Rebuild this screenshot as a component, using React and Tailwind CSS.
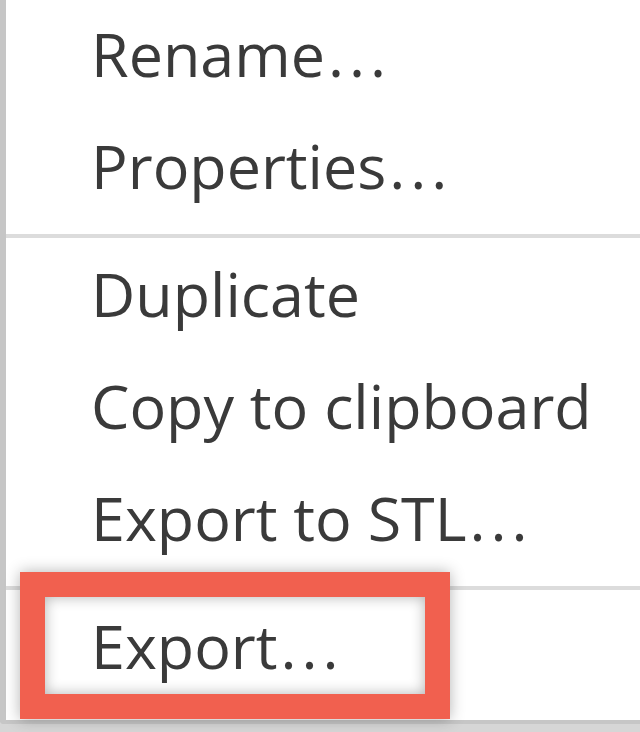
import React from 'react';

const font = { fontFamily: '"Open Sans", "Noto Sans", sans-serif' };

function Item({ label, dots, children }) {
  return (
    <div className="relative h-[112px] pl-[85px] text-[61px] leading-[112px] text-[#3a3a3a] whitespace-nowrap">
      {label}
      {dots && <span className="pl-[3px] tracking-[5px]">...</span>}
      {children}
    </div>
  );
}

function Separator() {
  return (
    <div className="h-[16px] flex flex-col justify-end">
      <div className="h-[4px] bg-[#dcdcdc]" />
    </div>
  );
}

export default function App() {
  return (
    <div className="w-[640px] h-[732px] overflow-hidden bg-[#d6d6d6]" style={font}>
      <div className="h-[726px] bg-white border-l-[6px] border-b-[4px] border-[#c6c6c6] rounded-bl-[4px]">
        <div className="-mt-[2px]">
          <Item label="Rename" dots />
          <Item label="Properties" dots />
          <Separator />
          <Item label="Duplicate" />
          <Item label="Copy to clipboard" />
          <Item label="Export to STL" dots />
          <Separator />
          <Item label="Export" dots>
            {/* highlight annotation */}
            <div className="absolute left-[14px] top-[-18px] w-[430px] h-[147px] border-[25px] border-[#f1604f] shadow-[0_0_14px_rgba(0,0,0,0.3),inset_0_0_14px_rgba(0,0,0,0.3)]" />
          </Item>
        </div>
      </div>
    </div>
  );
}
